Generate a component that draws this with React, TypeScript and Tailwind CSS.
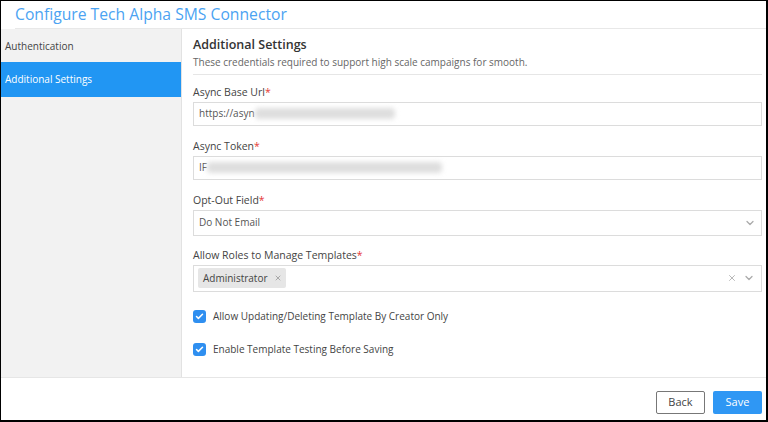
import React from 'react';
import { ChevronDown, X, Check } from 'lucide-react';

const font = { fontFamily: '"Open Sans", "Noto Sans", sans-serif' };

const Label = ({ text }: { text: string }) => (
  <div className="text-[10.5px] text-[#444] leading-[11px] mb-[4px]">
    {text}
    <span className="text-[#e53935]">*</span>
  </div>
);

const Blur = ({ w }: { w: number }) => (
  <span className="inline-block h-[11px] rounded-sm bg-[#dedede] blur-[2.5px]" style={{ width: w }} />
);

const Checkbox = ({ label }: { label: string }) => (
  <label className="flex items-center gap-[7px] text-[10px] leading-[13px] text-[#444]">
    <span className="w-[13px] h-[13px] rounded-[3px] bg-[#2f8ff0] flex items-center justify-center">
      <Check className="w-[9px] h-[9px] text-white" strokeWidth={4} />
    </span>
    {label}
  </label>
);

export default function App() {
  return (
    <div style={font} className="w-[768px] h-[422px] bg-white border-t border-l border-r-2 border-b-2 border-black flex flex-col overflow-hidden">
      {/* Header */}
      <div className="h-[28px] ml-[14px] flex items-end pb-[5px] border-b border-[#e8e8e8]">
        <h1 className="text-[15.7px] leading-none text-[#4ba3f2]">Configure Tech Alpha SMS Connector</h1>
      </div>

      <div className="flex flex-1 border-b border-[#e6e6e6]">
        {/* Sidebar */}
        <div className="w-[181px] bg-[#f2f2f2] border-r border-[#e2e2e2] flex flex-col">
          <div className="h-[33px] flex items-center pl-[4px] pt-[2px] text-[10px] text-[#444]">Authentication</div>
          <div className="h-[35px] flex items-center pl-[4px] text-[10px] text-white bg-[#2196f3]">Additional Settings</div>
        </div>

        {/* Content */}
        <div className="flex-1 pl-[11px] pr-[4px] pt-[10px]">
          <div className="border-b border-[#e6e6e6] pb-[7px]">
            <h2 className="text-[12.5px] font-semibold text-[#333] leading-none">Additional Settings</h2>
            <p className="text-[10px] text-[#666] mt-[5px] leading-none">These credentials required to support high scale campaigns for smooth.</p>
          </div>

          <div className="mt-[12px]">
            <Label text="Async Base Url" />
            <div className="h-[24px] border border-[#dcdcdc] flex items-center px-[5px] text-[10px] text-[#555]">
              https://asyn
              <Blur w={140} />
            </div>
          </div>

          <div className="mt-[15px]">
            <Label text="Async Token" />
            <div className="h-[24px] border border-[#dcdcdc] flex items-center px-[5px] text-[10px] text-[#555]">
              IF
              <Blur w={235} />
            </div>
          </div>

          <div className="mt-[15px]">
            <Label text="Opt-Out Field" />
            <div className="h-[26px] border border-[#dcdcdc] flex items-center justify-between px-[5px] text-[10px] text-[#555]">
              Do Not Email
              <ChevronDown className="w-[12px] h-[12px] text-[#aaa]" strokeWidth={2.5} />
            </div>
          </div>

          <div className="mt-[14px]">
            <Label text="Allow Roles to Manage Templates" />
            <div className="h-[27px] border border-[#dcdcdc] flex items-center justify-between pl-[4px] pr-[6px]">
              <span className="h-[20px] bg-[#e6e6e6] rounded-[2px] flex items-center gap-[6px] pl-[5px] pr-[4px] text-[10px] text-[#444]">
                Administrator
                <X className="w-[8px] h-[8px] text-[#888]" strokeWidth={2} />
              </span>
              <span className="flex items-center gap-[6px] text-[#aaa]">
                <X className="w-[10px] h-[10px]" strokeWidth={2} />
                <ChevronDown className="w-[12px] h-[12px]" strokeWidth={2.5} />
              </span>
            </div>
          </div>

          <div className="mt-[18px] flex flex-col gap-[20px]">
            <Checkbox label="Allow Updating/Deleting Template By Creator Only" />
            <Checkbox label="Enable Template Testing Before Saving" />
          </div>
        </div>
      </div>

      {/* Footer */}
      <div className="h-[42px] flex items-start justify-end gap-[8px] pr-[4px] pt-[13px]">
        <button className="w-[49px] h-[23px] border border-[#777] rounded-[2px] text-[11px] text-[#444] bg-white">Back</button>
        <button className="w-[49px] h-[23px] rounded-[2px] text-[11px] text-white bg-[#2f97f4]">Save</button>
      </div>
    </div>
  );
}
